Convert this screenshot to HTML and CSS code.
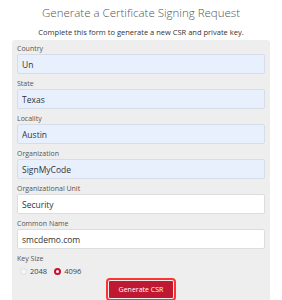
FILE: index.html
```html
<!DOCTYPE html>
<html lang="en">
<head>
    <meta charset="UTF-8">
    <meta name="viewport" content="width=device-width, initial-scale=1.0">
    <title>Generate a Certificate Signing Request</title>
    <link rel="stylesheet" href="styles.css">
</head>
<body>
    <h1 class="title">Generate a Certificate Signing Request</h1>
    <p class="subtitle">Complete this form to generate a new CSR and private key.</p>

    <form class="csr-form">
        <div class="field">
            <label>Country</label>
            <input class="filled" type="text" value="Un">
        </div>
        <div class="field">
            <label>State</label>
            <input class="filled" type="text" value="Texas">
        </div>
        <div class="field">
            <label>Locality</label>
            <input class="filled" type="text" value="Austin">
        </div>
        <div class="field">
            <label>Organization</label>
            <input class="filled" type="text" value="SignMyCode">
        </div>
        <div class="field">
            <label>Organizational Unit</label>
            <input type="text" value="Security">
        </div>
        <div class="field">
            <label>Common Name</label>
            <input type="text" value="smcdemo.com">
        </div>
        <div class="field">
            <label>Key Size</label>
            <div class="radio-row">
                <span class="radio-opt"><span class="radio"></span>2048</span>
                <span class="radio-opt"><span class="radio checked"></span>4096</span>
            </div>
        </div>
        <div class="actions">
            <button type="button" class="submit-btn">Generate CSR</button>
        </div>
    </form>
</body>
</html>
```

FILE: styles.css
```css
body {
    margin: 0;
    background: #fff;
    font-family: 'Open Sans', 'Liberation Sans', sans-serif;
    color: #333;
}

.title {
    margin: 3px 0 0;
    text-align: center;
    font-size: 11.5px;
    font-weight: 300;
    line-height: 20px;
    color: #555;
}

.subtitle {
    margin: 3px 0 0;
    text-align: center;
    font-size: 7.5px;
    font-weight: 500;
    line-height: 12px;
    color: #333;
}

.csr-form {
    margin: 2px 12px 0;
    padding: 4px 5px 2px;
    background: #eee;
    border-radius: 3px;
}

.field {
    margin-bottom: 5px;
}

.field label {
    display: block;
    font-size: 7px;
    line-height: 10px;
    color: #555;
}

.field input {
    display: block;
    box-sizing: border-box;
    width: 100%;
    height: 20px;
    margin: 0;
    padding: 0 4px;
    border: 1px solid #ddd;
    border-radius: 2px;
    background: #fff;
    font-family: inherit;
    font-size: 8.5px;
    color: #333;
}

.field input.filled {
    background: #e8f0fe;
    border-color: #d6dde8;
}

.radio-row {
    display: flex;
    gap: 7px;
    padding: 2px 0 0 3px;
    font-size: 7.5px;
    line-height: 10px;
    color: #444;
}

.radio-opt {
    display: flex;
    align-items: center;
    gap: 3px;
}

.radio {
    box-sizing: border-box;
    width: 7px;
    height: 7px;
    border: 1px solid #ddd;
    border-radius: 50%;
    background: #f6f6f6;
}

.radio.checked {
    border: 2px solid #c8102e;
    background: #fff;
}

.actions {
    display: flex;
    justify-content: center;
    padding-bottom: 2px;
}

.submit-btn {
    height: 17px;
    padding: 0 10px;
    border: none;
    border-radius: 1px;
    background: #c01830;
    color: #fff;
    font-family: inherit;
    font-size: 7px;
    outline: 2px solid #f33;
    outline-offset: 1px;
}
```
